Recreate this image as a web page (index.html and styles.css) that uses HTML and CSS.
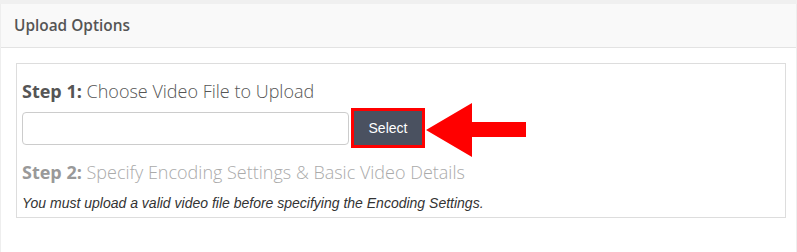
FILE: index.html
```html
<!DOCTYPE html>
<html lang="en">
<head>
  <meta charset="UTF-8" />
  <title>Upload Options</title>
  <link rel="stylesheet" href="styles.css">
</head>
<body>
  <div class="panel">
    <div class="panel-heading">Upload Options</div>
    <div class="panel-body">
      <div class="step-box">
        <h3 class="step"><strong>Step 1:</strong> Choose Video File to Upload</h3>
        <div class="file-row">
          <input type="text" class="file-input" />
          <button class="select-btn">Select</button>
          <svg class="arrow" width="100" height="54" viewBox="0 0 100 54">
            <polygon points="0,27 46,0 46,19 100,19 100,34 46,34 46,54" fill="#ff0000"/>
          </svg>
        </div>
        <h3 class="step step-disabled"><strong>Step 2:</strong> Specify Encoding Settings &amp; Basic Video Details</h3>
        <p class="note">You must upload a valid video file before specifying the Encoding Settings.</p>
      </div>
    </div>
  </div>
</body>
</html>
```

FILE: styles.css
```css
html, body {
  margin: 0;
  background-color: #fff;
}
body {
  border-top: 4px solid #f0f0f0;
  font-family: "Open Sans", sans-serif;
}
.panel {
  border-left: 1px solid #eee;
  border-right: 1px solid #eee;
  height: 248px;
  box-sizing: border-box;
}
.panel-heading {
  background-color: #f9f9f9;
  border-bottom: 1px solid #e3e3e3;
  height: 44px;
  box-sizing: border-box;
  padding-left: 13px;
  line-height: 44px;
  font-size: 15.4px;
  font-weight: 600;
  color: #555;
}
.panel-body {
  padding: 15px 10px 0 15px;
}
.step-box {
  border: 1px solid #ddd;
  padding: 15px 5px 0 5px;
  height: 155px;
  box-sizing: border-box;
}
.step {
  margin: 0;
  font-size: 18px;
  font-weight: 300;
  color: #555;
  line-height: 24px;
}
.step strong {
  font-weight: bold;
}
.step-disabled {
  color: #aaa;
  margin-top: 15px;
}
.step-disabled strong {
  color: #999;
}
.file-row {
  display: flex;
  align-items: center;
  margin-top: 8px;
}
.file-input {
  width: 327px;
  height: 33px;
  box-sizing: border-box;
  border: 1px solid #ccc;
  border-radius: 4px;
  margin: 0;
}
.select-btn {
  margin-left: 5px;
  width: 68px;
  height: 34px;
  border: none;
  background-color: #4a5160;
  color: #fff;
  font-family: "Liberation Sans", Arial, sans-serif;
  font-size: 14px;
  box-shadow: 0 0 0 3px #ff0000;
}
.arrow {
  margin: -8px 0 -12px 4px;
}
.note {
  margin: 11px 0 0;
  font-family: "Liberation Sans", Arial, sans-serif;
  font-style: italic;
  font-size: 14px;
  line-height: 16px;
  color: #333;
}
```
